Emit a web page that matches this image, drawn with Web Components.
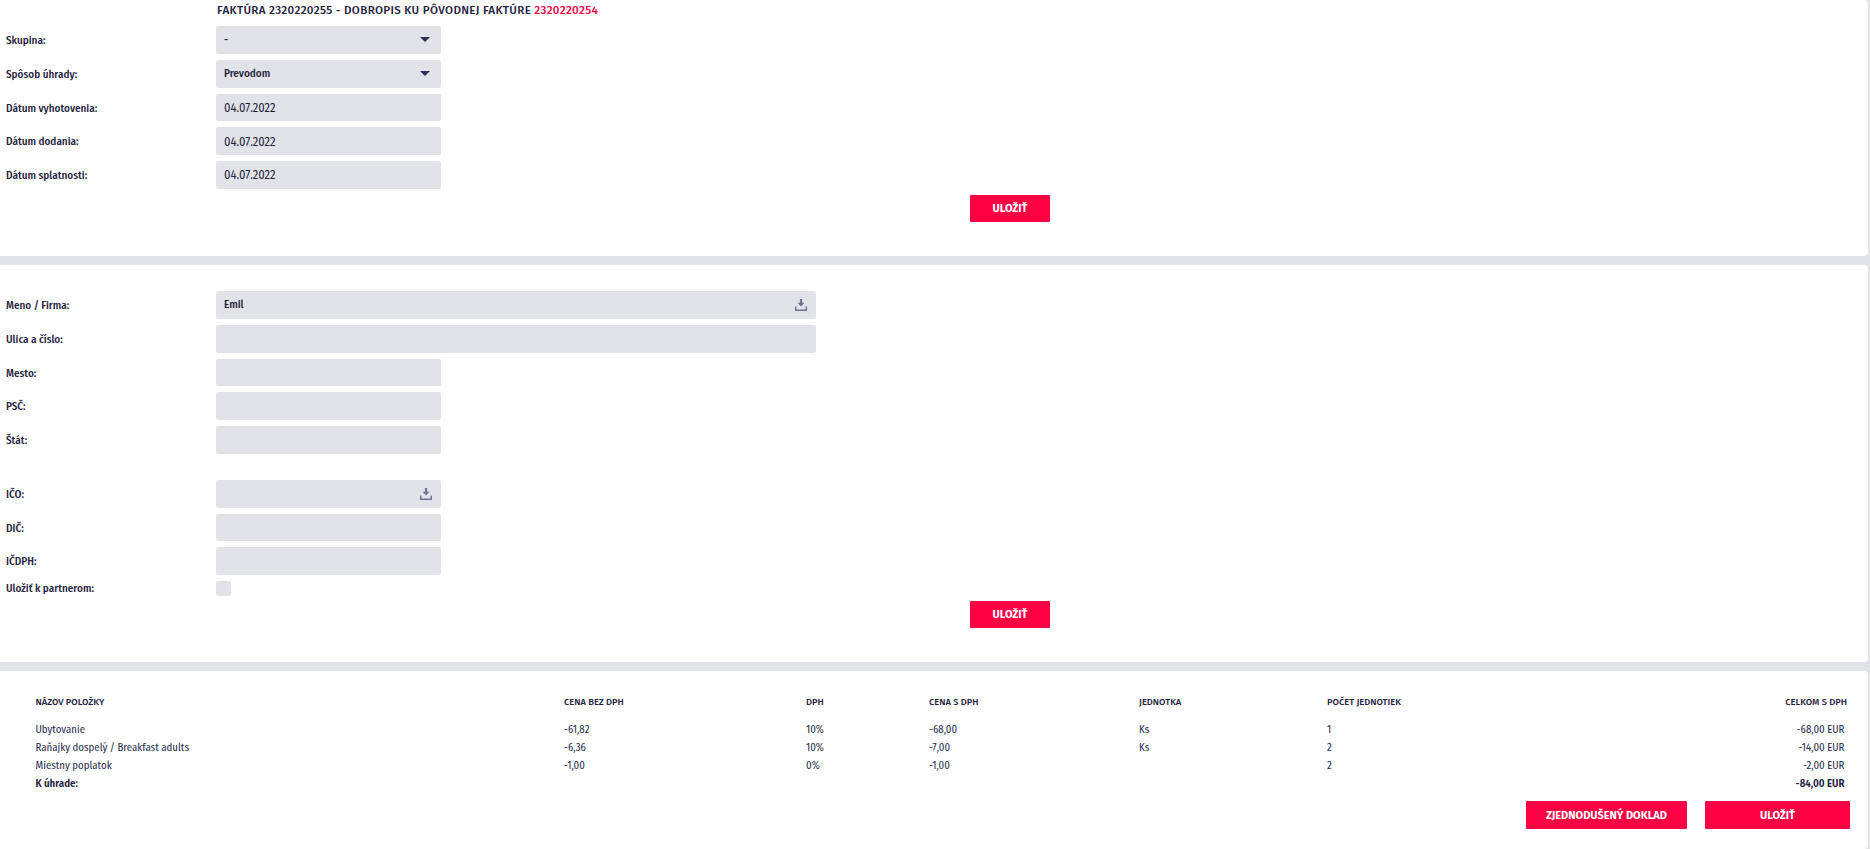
<!DOCTYPE html>
<html lang="sk"><head><meta charset="utf-8">
<style>
html,body{margin:0;padding:0;background:#e2e3e9;height:849px;overflow:hidden}
body{font:500 11.1px "Fira Sans Condensed","Fira Sans","Open Sans",sans-serif;color:#1f2340}
</style></head><body>
<inv-section style="--h:256px;--pt:0px;--mb:9px" data-first>
  <inv-title>FAKTÚRA 2320220255 - DOBROPIS KU PÔVODNEJ FAKTÚRE <span style="color:#ff0045">2320220254</span></inv-title>
  <inv-field label="Skupina:" value="-" kind="select"></inv-field>
  <inv-field label="Spôsob úhrady:" value="Prevodom" kind="select"></inv-field>
  <inv-field label="Dátum vyhotovenia:" value="04.07.2022" date></inv-field>
  <inv-field label="Dátum dodania:" value="04.07.2022" date></inv-field>
  <inv-field label="Dátum splatnosti:" value="04.07.2022" date></inv-field>
  <inv-save></inv-save>
</inv-section>
<inv-section style="--h:397px;--pt:26px;--mb:9px">
  <inv-field label="Meno / Firma:" value="Emil" kind="download" wide></inv-field>
  <inv-field label="Ulica a číslo:" wide></inv-field>
  <inv-field label="Mesto:"></inv-field>
  <inv-field label="PSČ:"></inv-field>
  <inv-field label="Štát:" style="margin-bottom:20px"></inv-field>
  <inv-field label="IČO:" kind="download"></inv-field>
  <inv-field label="DIČ:"></inv-field>
  <inv-field label="IČDPH:"></inv-field>
  <inv-field label="Uložiť k partnerom:" kind="check"></inv-field>
  <inv-save></inv-save>
</inv-section>
<inv-section style="--h:178px;--pt:0px;--mb:0px">
  <inv-items></inv-items>
</inv-section>
<script>
const tpl=(html)=>{const t=document.createElement('template');t.innerHTML=html;return t};
const DL='<svg width="12" height="12" viewBox="0 0 12 12"><path d="M4.9 0h2.2v3.8h2.4L6 7.6 2.5 3.8h2.4z" fill="#6f7393"/><path d="M.7 7.6v3.6h10.6V7.6" fill="none" stroke="#6f7393" stroke-width="1.5"/></svg>';
class InvSection extends HTMLElement{constructor(){super();this.attachShadow({mode:'open'}).appendChild(tpl(`<style>
:host{display:block;box-sizing:border-box;height:var(--h);margin-bottom:var(--mb);padding-top:var(--pt);background:#fff;margin-right:2px;border-radius:0 4px 4px 0;overflow:hidden}
</style><slot></slot>`).content.cloneNode(true))}}
class InvTitle extends HTMLElement{constructor(){super();this.attachShadow({mode:'open'}).appendChild(tpl(`<style>
:host{display:block;height:26px;box-sizing:border-box;padding:3px 0 0 217px;font:500 11.6px/14px "Fira Sans","Open Sans",sans-serif;letter-spacing:.33px;white-space:nowrap}
</style><slot></slot>`).content.cloneNode(true))}}
class InvField extends HTMLElement{
constructor(){super();this.attachShadow({mode:'open'}).appendChild(tpl(`<style>
:host{display:flex;height:33.75px;padding-left:6px;box-sizing:border-box;white-space:nowrap}
.l{width:210px;flex:none;line-height:29px;height:27.75px}
.b{width:225px;height:27.75px;background:#e2e3e9;border-radius:2px;display:flex;align-items:center;justify-content:space-between;padding:0 9px 0 8px;box-sizing:border-box}
:host([wide]) .b{width:600px}
:host([date]) .v{font-size:12.4px;font-weight:400}
.check{width:15px;height:15px;background:#e2e3e9;border-radius:2px}
.tri{width:0;height:0;border:5px solid transparent;border-top:5px solid #2a2e50;border-bottom:0;margin-right:2px}
</style><div class="l"></div><div class="b"><span class="v"></span><span class="i"></span></div>`).content.cloneNode(true))}
connectedCallback(){const s=this.shadowRoot,k=this.getAttribute('kind');
s.querySelector('.l').textContent=this.getAttribute('label');
s.querySelector('.v').textContent=this.getAttribute('value')||'';
const i=s.querySelector('.i');
if(k==='select')i.className='tri';
if(k==='download'){i.innerHTML=DL;i.style.cssText='display:flex'}
if(k==='check'){const b=s.querySelector('.b');b.className='check';this.style.height='20px';s.querySelector('.l').style.cssText='height:15px;line-height:15px'}
}}
class InvSave extends HTMLElement{constructor(){super();this.attachShadow({mode:'open'}).appendChild(tpl(`<style>
:host{display:flex;justify-content:center;padding-left:152px}
</style><inv-button style="--w:80px">ULOŽIŤ</inv-button>`).content.cloneNode(true))}}
class InvButton extends HTMLElement{constructor(){super();this.attachShadow({mode:'open'}).appendChild(tpl(`<style>
:host{display:flex;align-items:center;justify-content:center;width:var(--w);height:var(--bh,27px);background:#ff0045;color:#fff;border-radius:1px;font:700 11px "Fira Sans","Open Sans",sans-serif;white-space:nowrap}
</style><slot></slot>`).content.cloneNode(true))}}
const R=[["Ubytovanie","-61,82","10%","-68,00","Ks","1","-68,00 EUR"],["Raňajky dospelý / Breakfast adults","-6,36","10%","-7,00","Ks","2","-14,00 EUR"],["Miestny poplatok","-1,00","0%","-1,00","","2","-2,00 EUR"]];
class InvItems extends HTMLElement{constructor(){super();const row=(c,cl='')=>`<div class="r ${cl}">${c.map(x=>`<span>${x}</span>`).join('')}</div>`;
this.attachShadow({mode:'open'}).innerHTML=`<style>
:host{display:block;padding:22px 0 0 35.5px;font:400 10.8px "Fira Sans Condensed","Fira Sans",sans-serif;color:#2a2e50;white-space:nowrap}
.r{display:grid;grid-template-columns:528.5px 242px 123px 210px 188px 1fr auto;height:18px;line-height:18px;margin-right:23.5px}
.r span:last-child{text-align:right}
.h{font:500 9.3px/18px "Fira Sans",sans-serif;height:28px;margin-right:21px;color:#1f2340}
.t{font-weight:600;color:#1f2340}
.btns{display:flex;justify-content:flex-end;gap:18px;margin:8px 18px 0 0;--bh:28px}
</style>
${row(["NÁZOV POLOŽKY","CENA BEZ DPH","DPH","CENA S DPH","JEDNOTKA","POČET JEDNOTIEK","CELKOM S DPH"],'h')}
${R.map(x=>row(x)).join('')}
${row(["K úhrade:","","","","","","-84,00 EUR"],'t')}
<div class="btns"><inv-button style="--w:161px">ZJEDNODUŠENÝ DOKLAD</inv-button><inv-button style="--w:145px">ULOŽIŤ</inv-button></div>`}}
for(const [n,c] of [['inv-section',InvSection],['inv-title',InvTitle],['inv-field',InvField],['inv-button',InvButton],['inv-save',InvSave],['inv-items',InvItems]])customElements.define(n,c);
</script></body></html>
